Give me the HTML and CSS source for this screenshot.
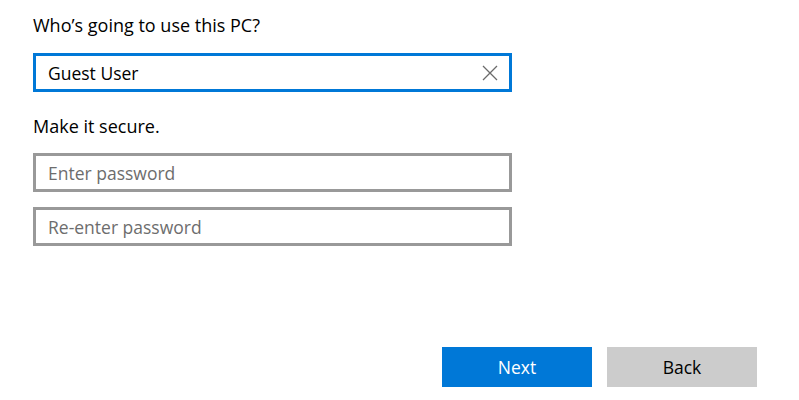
FILE: index.html
```html
<!DOCTYPE html>
<html>
<head>
<meta charset="utf-8">
<link rel="stylesheet" href="styles.css">
</head>
<body>
<div class="page">
  <div class="form">
    <div class="label first">Who’s going to use this PC?</div>
    <div class="field active">
      <span class="value">Guest User</span>
      <svg class="clear" width="16" height="16" viewBox="0 0 16 16"><path d="M1 1 L15 15 M15 1 L1 15" stroke="#6b6b6b" stroke-width="1.3" fill="none"/></svg>
    </div>
    <div class="label second">Make it secure.</div>
    <div class="field"><span class="placeholder">Enter password</span></div>
    <div class="field gap"><span class="placeholder">Re-enter password</span></div>
  </div>
  <div class="actions">
    <div class="btn primary">Next</div>
    <div class="btn secondary">Back</div>
  </div>
</div>
</body>
</html>
```
FILE: styles.css
```css
html, body {
  margin: 0;
  padding: 0;
  background: #ffffff;
}
body {
  width: 799px;
  height: 400px;
  overflow: hidden;
  font-family: "Open Sans", "Noto Sans", "Liberation Sans", sans-serif;
  color: #000;
}
.page {
  display: flex;
  flex-direction: column;
  height: 400px;
  padding: 0 0 0 33px;
  box-sizing: border-box;
}
.form {
  width: 479px;
  display: flex;
  flex-direction: column;
}
.label {
  font-size: 18px;
  line-height: 24px;
  height: 24px;
}
.label.first {
  margin-top: 13px;
}
.field {
  margin-top: 16px;
  height: 39px;
  box-sizing: border-box;
  border: 3px solid #999999;
  display: flex;
  align-items: center;
  padding: 0 12px;
  font-size: 17.5px;
  background: #fff;
}
.field.active {
  border-color: #0078d7;
}
.field.gap {
  margin-top: 15px;
}
.value {
  flex: 1;
  color: #000;
}
.placeholder {
  color: #6d6d6d;
}
.clear {
  display: block;
  margin-right: -1px;
}
.label.second {
  margin-top: 22px;
  margin-bottom: -1px;
}
.actions {
  display: flex;
  gap: 15px;
  margin-top: auto;
  margin-bottom: 13px;
  margin-left: 409px;
}
.btn {
  width: 150px;
  height: 40px;
  display: flex;
  align-items: center;
  justify-content: center;
  font-size: 17.5px;
}
.btn.primary {
  background: #0078d7;
  color: #fff;
}
.btn.secondary {
  background: #cccccc;
  color: #000;
}
```
